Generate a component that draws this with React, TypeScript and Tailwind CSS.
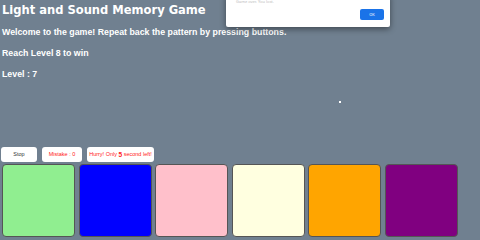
import React from 'react'

const tiles = ['bg-[#90ee90]', 'bg-[#0000ff]', 'bg-[#ffc0cb]', 'bg-[#ffffe0]', 'bg-[#ffa500]', 'bg-[#800080]']

export default function App() {
  return (
    <div className="relative w-[480px] h-[240px] overflow-hidden bg-[#708090] text-white">
      <div className="px-[2px] pt-[1px]">
        <h1 className="text-[12.8px] leading-[17px] font-bold whitespace-nowrap" style={{ fontFamily: '"DejaVu Sans Condensed", "DejaVu Sans", Verdana, sans-serif', fontStretch: 'condensed' }}>
          Light and Sound Memory Game
        </h1>
        <div className="font-bold text-[8.8px] leading-[13px] whitespace-nowrap" style={{ fontFamily: '"Liberation Sans", Arial, sans-serif' }}>
          <p className="mt-[8px]">Welcome to the game! Repeat back the pattern by pressing buttons.</p>
          <p className="mt-[8px]">Reach Level 8 to win</p>
          <p className="mt-[8px]">Level : 7</p>
        </div>
      </div>

      <div className="absolute left-0 top-[147px] flex flex-col gap-[2px] px-[1px]" style={{ fontFamily: '"Liberation Sans", Arial, sans-serif' }}>
        <div className="flex gap-[5px] text-[5.5px] whitespace-nowrap">
          <button className="w-[36px] h-[15px] bg-white rounded-[3px] text-[#333]">Stop</button>
          <div className="w-[40px] h-[15px] bg-white rounded-[3px] text-[#ff2020] flex items-center justify-center">Mistake : 0</div>
          <div className="w-[67px] h-[15px] bg-white rounded-[3px] text-[#ff2020] flex items-center justify-center">
            Hurry! Only&nbsp;<b className="text-[6.5px]">5</b>&nbsp;second left!
          </div>
        </div>
        <div className="flex gap-[3.5px] pl-[1px]">
          {tiles.map((c) => (
            <div key={c} className={`${c} w-[73px] h-[73px] rounded-[4px] border border-[#555]`} />
          ))}
        </div>
      </div>

      <div className="absolute left-[226px] top-[-6px] w-[164px] h-[33px] bg-white shadow-[0_2px_6px_rgba(0,0,0,0.45)] rounded-b-[2px]">
        <div className="absolute left-[10px] top-[6px] text-[4px] leading-[4px] text-[#bbb]">Game over. You lost.</div>
        <div className="absolute left-[134px] top-[15px] w-[24px] h-[11px] rounded-[2px] bg-[#1a73e8] text-white text-[4px] flex items-center justify-center">OK</div>
      </div>

      <div className="absolute left-[339px] top-[101px] w-[2px] h-[2px] bg-white" />
    </div>
  )
}
